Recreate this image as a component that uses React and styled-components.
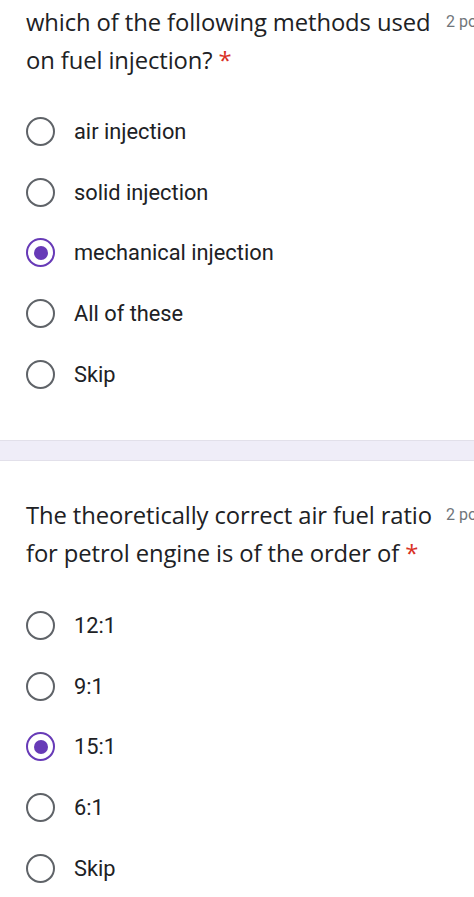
import React from "react";
import styled, { createGlobalStyle } from "styled-components";

const Global = createGlobalStyle`
  html, body { margin: 0; padding: 0; background: #fff; overflow: hidden; }
  body { width: 474px; height: 897px; }
`;

const Page = styled.div`
  width: 474px;
  height: 897px;
  overflow: hidden;
  background: #fff;
`;

const Card = styled.section`
  padding: ${(p) => p.$top}px 0 0 26px;
  height: ${(p) => p.$h}px;
  box-sizing: border-box;
`;

const TitleRow = styled.div`
  display: flex;
  align-items: flex-start;
  white-space: nowrap;
`;

const Title = styled.div`
  width: 414px;
  flex: none;
  white-space: normal;
  font-family: "Open Sans", sans-serif;
  font-size: 23.8px;
  line-height: 38px;
  color: #202124;
  letter-spacing: -0.1px;
`;

const Star = styled.span`
  color: #d93025;
  margin-left: 6px;
`;

const Points = styled.div`
  flex: none;
  margin-left: 6px;
  font-family: "Roboto", sans-serif;
  font-size: 16px;
  line-height: 38px;
  color: #70757a;
`;

const Options = styled.div`
  display: flex;
  flex-direction: column;
  margin-top: ${(p) => p.$mt}px;
`;

const Option = styled.label`
  display: flex;
  align-items: center;
  height: 60.7px;
  gap: 19px;
  font-family: "Roboto", sans-serif;
  font-size: 21.8px;
  color: #202124;
`;

const Radio = styled.span`
  width: 29px;
  height: 29px;
  box-sizing: border-box;
  border-radius: 50%;
  border: 2.6px solid ${(p) => (p.$on ? "#673ab7" : "#5f6368")};
  display: flex;
  align-items: center;
  justify-content: center;
  flex: none;
  &::after {
    content: "";
    width: 14px;
    height: 14px;
    border-radius: 50%;
    background: #673ab7;
    display: ${(p) => (p.$on ? "block" : "none")};
  }
`;

const Divider = styled.div`
  height: 19px;
  background: #efedf8;
  border-top: 1px solid #e2e0ea;
  border-bottom: 1px solid #e2e0ea;
`;

const q1 = ["air injection", "solid injection", "mechanical injection", "All of these", "Skip"];
const q2 = ["12:1", "9:1", "15:1", "6:1", "Skip"];

function Question({ title, opts, selected, top, h, mt }) {
  return (
    <Card $top={top} $h={h}>
      <TitleRow>
        <Title>
          {title}
          <Star>*</Star>
        </Title>
        <Points>2 points</Points>
      </TitleRow>
      <Options $mt={mt}>
        {opts.map((o, i) => (
          <Option key={o + i}>
            <Radio $on={i === selected} />
            {o}
          </Option>
        ))}
      </Options>
    </Card>
  );
}

export default function App() {
  return (
    <Page>
      <Global />
      <Question
        title="which of the following methods used on fuel injection?"
        opts={q1}
        selected={2}
        top={3}
        h={440}
        mt={22}
      />
      <Divider />
      <Question
        title="The theoretically correct air fuel ratio for petrol engine is of the order of"
        opts={q2}
        selected={2}
        top={35}
        h={436}
        mt={23}
      />
    </Page>
  );
}
